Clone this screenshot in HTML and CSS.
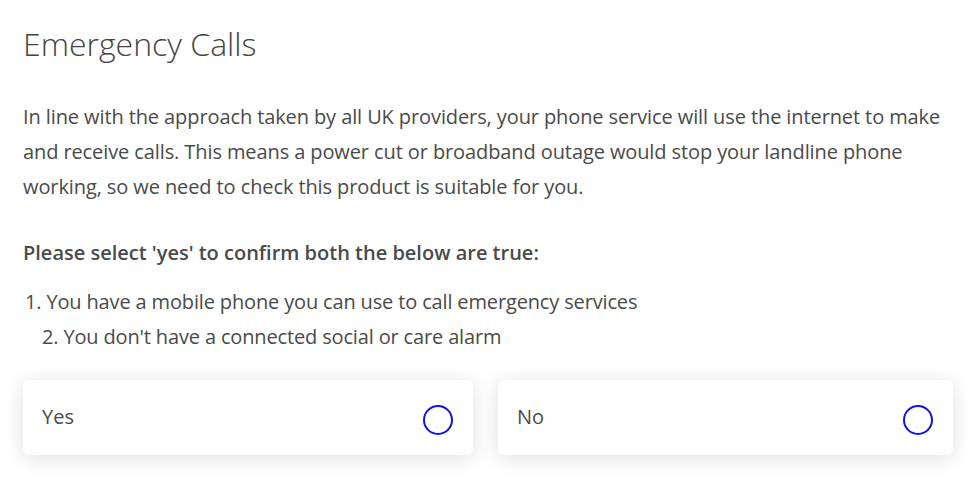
FILE: index.html
```html
<!DOCTYPE html>
<html>
<head>
<meta charset="utf-8">
<link rel="stylesheet" href="styles.css">
</head>
<body>
<main class="page">
  <h1 class="title">Emergency Calls</h1>
  <p class="intro">In line with the approach taken by all UK providers, your phone service will use the internet to make and receive calls. This means a power cut or broadband outage would stop your landline phone working, so we need to check this product is suitable for you.</p>
  <p class="prompt">Please select 'yes' to confirm both the below are true:</p>
  <ol class="conditions">
    <li class="cond cond-first">1. You have a mobile phone you can use to call emergency services</li>
    <li class="cond cond-second">2. You don't have a connected social or care alarm</li>
  </ol>
  <div class="options">
    <label class="option"><span class="option-label">Yes</span><span class="radio"></span></label>
    <label class="option"><span class="option-label">No</span><span class="radio"></span></label>
  </div>
</main>
</body>
</html>
```
FILE: styles.css
```css
html, body { margin: 0; padding: 0; background: #fff; }
body { font-family: "Open Sans", Lato, sans-serif; color: #4a4a4a; }
.page { padding: 0 23px 22px 23px; }
.title { font-size: 32px; font-weight: 300; margin: 0; padding-top: 22px; line-height: 44px; color: #444; }
.intro { font-size: 20px; line-height: 35px; margin: 33px 0 0 0; letter-spacing: -0.1px; }
.prompt { font-size: 20px; font-weight: 600; margin: 34px 0 0 0; line-height: 30px; letter-spacing: 0; }
.conditions { list-style: none; margin: 16px 0 0 0; padding: 0; font-size: 20px; line-height: 35px; letter-spacing: -0.15px; }
.cond-first { padding-left: 2px; }
.cond-second { padding-left: 19px; }
.options { display: flex; gap: 25px; margin-top: 26px; }
.option { flex: 0 0 450px; height: 75px; box-sizing: border-box; background: #fff; border-radius: 6px; box-shadow: 0 3px 20px rgba(0,0,0,0.13); display: flex; align-items: center; justify-content: space-between; padding: 0 20px 0 19px; font-size: 20px; }
.option-label { margin-top: -3px; }
.option + .option { flex-basis: 455px; }
.radio { width: 26px; height: 26px; border: 2px solid #0a14f0; border-radius: 50%; margin-top: 4px; }
```
